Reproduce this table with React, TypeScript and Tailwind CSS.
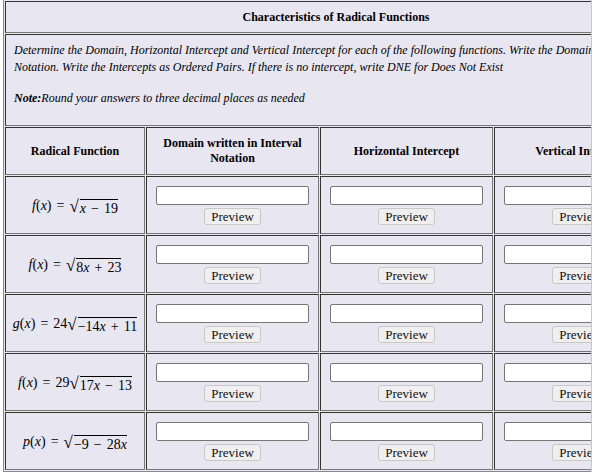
import React from "react";

const cell =
  "border border-t-[#333333] border-l-[#333333] border-r-[#777777] border-b-[#777777] bg-[#e8e6f1]";

function Sqrt({ children }: { children: React.ReactNode }) {
  return (
    <span className="inline-flex items-end">
      <span className="text-[17px] leading-[18px] mr-[1px]">√</span>
      <span className="border-t border-black leading-[15px] pt-[1px]">{children}</span>
    </span>
  );
}

const I = ({ c }: { c: string }) => <i>{c}</i>;
const Op = ({ c }: { c: string }) => <span className="mx-[5px]">{c}</span>;

const funcs: React.ReactNode[] = [
  <>
    <I c="f" />(<I c="x" />)<Op c="=" />
    <Sqrt>
      <I c="x" />
      <Op c="−" />19
    </Sqrt>
  </>,
  <>
    <I c="f" />(<I c="x" />)<Op c="=" />
    <Sqrt>
      8<I c="x" />
      <Op c="+" />23
    </Sqrt>
  </>,
  <>
    <I c="g" />(<I c="x" />)<Op c="=" />24
    <Sqrt>
      −14<I c="x" />
      <Op c="+" />11
    </Sqrt>
  </>,
  <>
    <I c="f" />(<I c="x" />)<Op c="=" />29
    <Sqrt>
      17<I c="x" />
      <Op c="−" />13
    </Sqrt>
  </>,
  <>
    <I c="p" />(<I c="x" />)<Op c="=" />
    <Sqrt>
      −9<Op c="−" />28<I c="x" />
    </Sqrt>
  </>,
];

function AnswerCell() {
  return (
    <div className={`${cell} flex flex-col items-center justify-center gap-[3px]`}>
      <input
        type="text"
        className="w-[153px] h-[19px] bg-white border border-[#767676] rounded-[2px] outline-none"
      />
      <button className="h-[17px] px-[6px] bg-[#efefef] border border-[#c8c8c8] rounded-[3px] text-[13px] leading-[15px] text-[#111]">
        Preview
      </button>
    </div>
  );
}

export default function App() {
  return (
    <div
      className="w-[595px] h-[476px] bg-white overflow-hidden text-black"
      style={{ fontFamily: '"Liberation Serif", "Times New Roman", serif' }}
    >
      <div className="w-[592px] overflow-hidden border-r border-[#c9c3e2]">
        <div className="ml-[3px] w-max border-l border-b border-[#8a8a8a] bg-[#e8e6f1] pt-px pl-px pr-px pb-px">
          <div className="grid grid-cols-[140px_173px_173px_173px] gap-px">
            <div className={`${cell} col-span-4 h-[32px] flex items-center justify-center text-[12px] font-bold`}>
              Characteristics of Radical Functions
            </div>
            <div className={`${cell} col-span-4 h-[92px] px-[8px] pt-[7px] text-[12px] italic leading-[17px]`}>
              <p>
                Determine the Domain, Horizontal Intercept and Vertical Intercept for each of the following
                functions. Write the Domain in Interval
                <br />
                Notation. Write the Intercepts as Ordered Pairs. If there is no intercept, write DNE for Does Not
                Exist
              </p>
              <p className="mt-[14px]">
                <b>Note:</b>Round your answers to three decimal places as needed
              </p>
            </div>
            <div className={`${cell} h-[48px] flex items-center justify-center text-center text-[12px] font-bold leading-[15px]`}>
              Radical Function
            </div>
            <div className={`${cell} h-[48px] flex items-center justify-center text-center text-[12px] font-bold leading-[15px] px-[4px]`}>
              Domain written in Interval
              <br />
              Notation
            </div>
            <div className={`${cell} h-[48px] flex items-center justify-center text-center text-[12px] font-bold leading-[15px]`}>
              Horizontal Intercept
            </div>
            <div className={`${cell} h-[48px] flex items-center justify-center text-center text-[12px] font-bold leading-[15px]`}>
              Vertical Intercept
            </div>
            {funcs.map((f, i) => (
              <React.Fragment key={i}>
                <div className={`${cell} h-[58px] flex items-center justify-center text-[14px] whitespace-nowrap`}>
                  <span className="inline-flex items-end">{f}</span>
                </div>
                <AnswerCell />
                <AnswerCell />
                <AnswerCell />
              </React.Fragment>
            ))}
          </div>
        </div>
      </div>
    </div>
  );
}
